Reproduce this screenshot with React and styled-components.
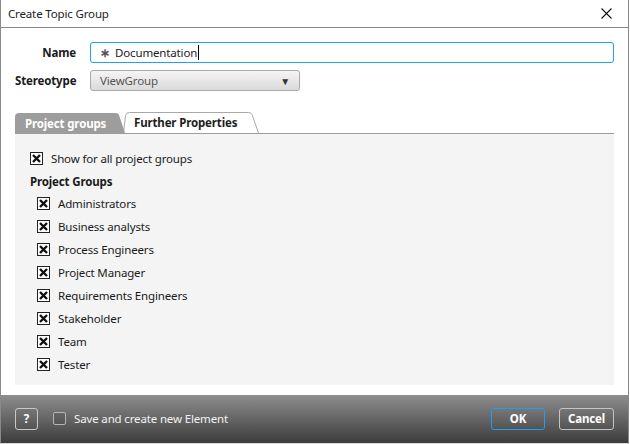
import React from 'react';
import styled, { createGlobalStyle } from 'styled-components';

const Global = createGlobalStyle`
  html, body { margin: 0; padding: 0; background: #fff; }
  body {
    font-family: "Noto Sans", "Liberation Sans", sans-serif;
    font-size: 11.5px;
    letter-spacing: -0.15px;
    color: #1a1a1a;
  }
  * { box-sizing: border-box; }
`;

const Window = styled.div`
  width: 629px;
  height: 444px;
  border-left: 1px solid #8a8a8a;
  border-right: 1px solid #8a8a8a;
  border-bottom: 1px solid #d8d8d8;
  display: flex;
  flex-direction: column;
  background: #fff;
`;

const TitleBar = styled.div`
  height: 28px;
  flex: none;
  border-bottom: 1px solid #8a8a8a;
  display: flex;
  align-items: center;
  justify-content: space-between;
  padding: 0 16px 1px 7px;
`;

const Title = styled.span`
  color: #222;
`;

const CloseButton = styled.span`
  display: flex;
  width: 11px;
  height: 11px;
`;

const Body = styled.div`
  flex: 1;
  display: flex;
  flex-direction: column;
  padding: 14px 14px 10px 14px;
`;

const Form = styled.div`
  display: grid;
  grid-template-columns: 61px 1fr;
  column-gap: 14px;
  row-gap: 7px;
  align-items: center;
`;

const Label = styled.label`
  font-weight: 700;
  text-align: right;
  color: #1a1a1a;
`;

const TextInput = styled.div`
  height: 21px;
  border: 1px solid #1e9ff0;
  border-radius: 3px;
  display: flex;
  align-items: center;
  padding-left: 9px;
  background: #fff;
`;

const Required = styled.span`
  color: #555;
  width: 15px;
  font-size: 12px;
  font-weight: 700;
`;

const Caret = styled.span`
  display: inline-block;
  width: 1px;
  height: 15px;
  background: #000;
  margin-left: 1px;
`;

const Select = styled.div`
  width: 210px;
  height: 21px;
  border: 1px solid #a9a9a9;
  border-radius: 3px;
  background: linear-gradient(#f5f5f5, #dadada);
  display: flex;
  align-items: center;
  justify-content: space-between;
  padding: 0 9px 0 9px;
  color: #555;
`;

const Arrow = styled.span`
  font-size: 10px;
  color: #333;
`;

const TabStrip = styled.div`
  margin-top: 21px;
  height: 21px;
  display: flex;
  align-items: flex-end;
`;

const Tab = styled.div`
  position: relative;
  width: ${p => p.$w}px;
  height: ${p => (p.$active ? 20 : 21)}px;
  margin-left: ${p => p.$offset || 0}px;
  display: flex;
  align-items: center;
  padding-left: ${p => p.$pad}px;
  font-weight: 700;
  color: ${p => (p.$active ? '#fff' : '#1e1e1e')};
  z-index: ${p => (p.$active ? 2 : 1)};
`;

const TabShape = styled.svg`
  position: absolute;
  left: 0;
  top: 0;
  z-index: -1;
`;

const TabLabel = styled.span`
  position: relative;
  margin-top: ${p => (p.$active ? 1 : 0)}px;
`;

const Panel = styled.div`
  flex: 1;
  background: #f4f4f4;
  border-top: 1px solid #9c9c9c;
  padding: 13px 15px 0 15px;
  display: flex;
  flex-direction: column;
`;

const CheckRow = styled.div`
  height: 23px;
  display: flex;
  align-items: center;
  gap: 8px;
  padding-left: ${p => p.$indent || 0}px;
  color: #1a1a1a;
`;

const GroupHeading = styled.div`
  height: 22px;
  display: flex;
  align-items: center;
  font-weight: 700;
`;

const Footer = styled.div`
  height: 48px;
  flex: none;
  background: linear-gradient(#8e8e8e, #3c3c3c);
  display: flex;
  align-items: center;
  padding: 0 14px 1px 14px;
  color: #f2f2f2;
`;

const HelpButton = styled.button`
  width: 23px;
  height: 22px;
  border: 1px solid #c8c8c8;
  border-radius: 3px;
  background: transparent;
  color: #fff;
  font-family: inherit;
  font-weight: 700;
  font-size: 11.5px;
  padding: 0;
`;

const FooterCheck = styled.span`
  width: 13px;
  height: 13px;
  border: 1px solid #b4b4b4;
  border-radius: 2px;
  background: rgba(0, 0, 0, 0.08);
  margin-left: 15px;
`;

const FooterText = styled.span`
  margin-left: 8px;
  color: #f2f2f2;
`;

const Spacer = styled.div`
  flex: 1;
`;

const DialogButton = styled.button`
  height: 22px;
  width: ${p => p.$w}px;
  margin-left: ${p => p.$gap || 0}px;
  border: 1px solid ${p => (p.$primary ? '#1ea0f2' : '#c4c4c4')};
  border-radius: 3px;
  background: transparent;
  color: #fff;
  font-family: inherit;
  font-weight: 700;
  font-size: 11.5px;
  letter-spacing: -0.15px;
  padding: 0;
`;

const Check = () => (
  <svg width="13" height="13" viewBox="0 0 13 13">
    <rect x="0.5" y="0.5" width="12" height="12" fill="#fff" stroke="#222" />
    <path d="M3 3 L10 10 M10 3 L3 10" stroke="#111" strokeWidth="2.4" />
  </svg>
);

const groups = [
  'Administrators',
  'Business analysts',
  'Process Engineers',
  'Project Manager',
  'Requirements Engineers',
  'Stakeholder',
  'Team',
  'Tester',
];

export default function App() {
  return (
    <>
      <Global />
      <Window>
        <TitleBar>
          <Title>Create Topic Group</Title>
          <CloseButton>
            <svg width="11" height="11" viewBox="0 0 11 11">
              <path d="M0.5 0.5 L10.5 10.5 M10.5 0.5 L0.5 10.5" stroke="#111" strokeWidth="1.1" />
            </svg>
          </CloseButton>
        </TitleBar>
        <Body>
          <Form>
            <Label>Name</Label>
            <TextInput>
              <Required>∗</Required>
              <span>Documentation</span>
              <Caret />
            </TextInput>
            <Label>Stereotype</Label>
            <Select>
              <span>ViewGroup</span>
              <Arrow>▼</Arrow>
            </Select>
          </Form>
          <TabStrip>
            <Tab $active $w={110} $pad={10}>
              <TabShape width="110" height="20" viewBox="0 0 110 20">
                <path d="M0 20 L0 4 Q0 0 4 0 L101 0 Q103 0 104 2 L110 20 Z" fill="#9d9d9d" />
              </TabShape>
              <TabLabel $active>Project groups</TabLabel>
            </Tab>
            <Tab $w={136} $pad={11} $offset={-2}>
              <TabShape width="136" height="21" viewBox="0 0 136 21">
                <path
                  d="M0.5 21 L2.5 3.5 Q3 0.5 6.5 0.5 L125.5 0.5 Q128 0.5 129 2.5 L135.5 21"
                  fill="#fff"
                  stroke="#a8a8a8"
                />
              </TabShape>
              <TabLabel>Further Properties</TabLabel>
            </Tab>
          </TabStrip>
          <Panel>
            <CheckRow>
              <Check />
              <span>Show for all project groups</span>
            </CheckRow>
            <GroupHeading>Project Groups</GroupHeading>
            {groups.map(g => (
              <CheckRow key={g} $indent={7}>
                <Check />
                <span>{g}</span>
              </CheckRow>
            ))}
          </Panel>
        </Body>
        <Footer>
          <HelpButton>?</HelpButton>
          <FooterCheck />
          <FooterText>Save and create new Element</FooterText>
          <Spacer />
          <DialogButton $primary $w={54}>OK</DialogButton>
          <DialogButton $w={55} $gap={14}>Cancel</DialogButton>
        </Footer>
      </Window>
    </>
  );
}
